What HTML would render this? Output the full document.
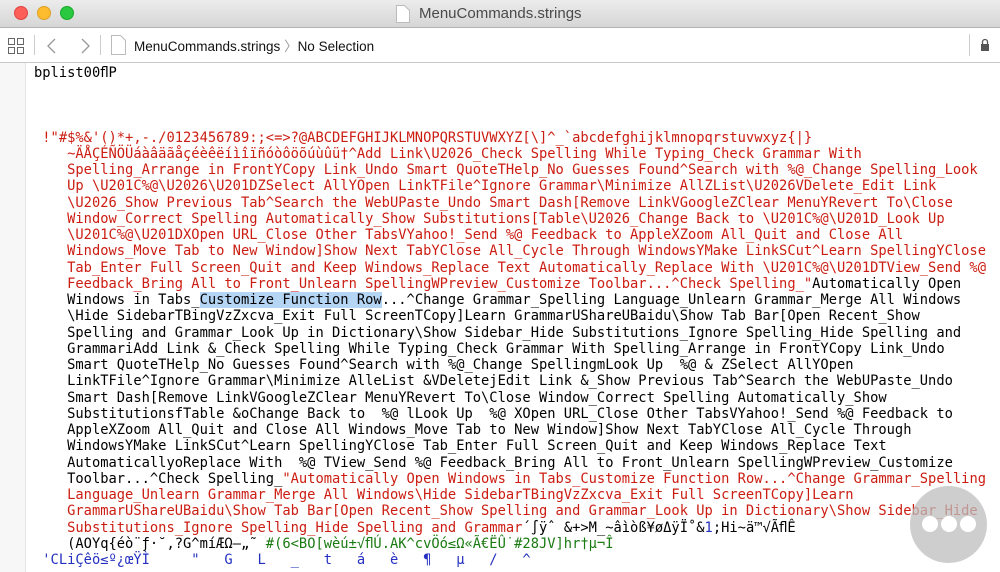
<!DOCTYPE html>
<html><head><meta charset="utf-8"><style>
*{margin:0;padding:0;box-sizing:border-box}
body{width:1000px;height:572px;overflow:hidden;background:#fff;position:relative;font-family:"Liberation Sans","DejaVu Sans",sans-serif}
#title{position:absolute;left:0;top:0;width:1000px;height:28px;background:linear-gradient(#ececec,#d6d6d6);border-bottom:1px solid #b4b4b4}
.tl{position:absolute;top:6px;width:14px;height:14px;border-radius:50%}
#ttext{position:absolute;left:419px;top:5px;font-size:15px;color:#4a4a4a}
#tb{position:absolute;left:0;top:28px;width:1000px;height:35px;background:#fff;border-bottom:1px solid #c8c8c8}
#crumb{position:absolute;left:134px;top:7px;font-size:13.5px;color:#111}
#gut{position:absolute;left:0;top:63px;width:26px;height:509px;background:#f7f7f7;border-right:1px solid #e6e6e6}
pre{position:absolute;left:34px;top:64.5px;font-family:"DejaVu Sans Mono","Liberation Mono",monospace;font-size:13.75px;line-height:16.25px;color:#000;white-space:pre}
.r{color:#cc1d12}.g{color:#1a7a12}.b{color:#2430c0}.h{background:#b5d5f5}
#fab{position:absolute;left:910px;top:486px;width:77px;height:77px;border-radius:50%;background:rgba(190,190,190,0.75)}
#fab i{position:absolute;top:30px;width:16px;height:16px;border-radius:50%;background:#fff}
</style></head><body>
<div id="title">
<div class="tl" style="left:14px;background:#fc5f57;border:1px solid #df4744"></div>
<div class="tl" style="left:37px;background:#fdbc2e;border:1px solid #de9f26"></div>
<div class="tl" style="left:60px;background:#29c840;border:1px solid #1aab29"></div>
<svg style="position:absolute;left:395px;top:4px" width="16" height="20"><path d="M1.5 1.5h8l5 5v12h-13z" fill="#fff" stroke="#bbb"/></svg>
<div id="ttext">MenuCommands.strings</div>
</div>
<div id="tb">
<svg style="position:absolute;left:7px;top:9px" width="18" height="18" fill="none" stroke="#666" stroke-width="1"><rect x="1.5" y="1.5" width="6" height="6"/><rect x="10.5" y="1.5" width="6" height="6"/><rect x="1.5" y="10.5" width="6" height="6"/><rect x="10.5" y="10.5" width="6" height="6"/></svg>
<div style="position:absolute;left:34px;top:7px;width:1px;height:20px;background:#ccc"></div>
<svg style="position:absolute;left:44px;top:9px" width="60" height="18" fill="none" stroke="#999" stroke-width="1.3"><path d="M11 2L4 9l7 7"/><path d="M38 2l7 7-7 7"/></svg>
<div style="position:absolute;left:100px;top:7px;width:1px;height:20px;background:#ccc"></div>
<svg style="position:absolute;left:110px;top:6px" width="18" height="22"><path d="M1.5 1.5h9l5 5v14h-14z" fill="#fff" stroke="#bbb"/></svg>
<div id="crumb">MenuCommands.strings <span style="color:#999">〉</span>No Selection</div>
<div style="position:absolute;left:969px;top:6px;width:1px;height:22px;background:#ccc"></div>
<svg style="position:absolute;left:980px;top:10px" width="10" height="14"><path d="M2.5 6V4a2.5 2.5 0 015 0v2" fill="none" stroke="#555" stroke-width="1.3"/><rect x="1" y="6" width="8" height="7" fill="#555"/></svg>
</div>
<div id="gut"></div>
<pre>bplist00ﬂP



<span class="r"> !"#$%&amp;'()*+,-./0123456789:;&lt;=&gt;?@ABCDEFGHIJKLMNOPQRSTUVWXYZ[\]^_`abcdefghijklmnopqrstuvwxyz{|}
    ~ÄÅÇÉÑÖÜáàâäãåçéèêëíìîïñóòôöõúùûü†^Add Link\U2026_Check Spelling While Typing_Check Grammar With
    Spelling_Arrange in FrontYCopy Link_Undo Smart QuoteTHelp_No Guesses Found^Search with %@_Change Spelling_Look
    Up \U201C%@\U2026\U201DZSelect AllYOpen LinkTFile^Ignore Grammar\Minimize AllZList\U2026VDelete_Edit Link
    \U2026_Show Previous Tab^Search the WebUPaste_Undo Smart Dash[Remove LinkVGoogleZClear MenuYRevert To\Close
    Window_Correct Spelling Automatically_Show Substitutions[Table\U2026_Change Back to \U201C%@\U201D_Look Up
    \U201C%@\U201DXOpen URL_Close Other TabsVYahoo!_Send %@ Feedback to AppleXZoom All_Quit and Close All
    Windows_Move Tab to New Window]Show Next TabYClose All_Cycle Through WindowsYMake LinkSCut^Learn SpellingYClose
    Tab_Enter Full Screen_Quit and Keep Windows_Replace Text Automatically_Replace With \U201C%@\U201DTView_Send %@
    Feedback_Bring All to Front_Unlearn SpellingWPreview_Customize Toolbar...^Check Spelling_"</span>Automatically Open
    Windows in Tabs_<span class="h">Customize Function Row</span>...^Change Grammar_Spelling Language_Unlearn Grammar_Merge All Windows
    \Hide SidebarTBingVzZxcva_Exit Full ScreenTCopy]Learn GrammarUShareUBaidu\Show Tab Bar[Open Recent_Show
    Spelling and Grammar_Look Up in Dictionary\Show Sidebar_Hide Substitutions_Ignore Spelling_Hide Spelling and
    GrammariAdd Link &amp;_Check Spelling While Typing_Check Grammar With Spelling_Arrange in FrontYCopy Link_Undo
    Smart QuoteTHelp_No Guesses Found^Search with %@_Change SpellingmLook Up  %@ &amp; ZSelect AllYOpen
    LinkTFile^Ignore Grammar\Minimize AlleList &amp;VDeletejEdit Link &amp;_Show Previous Tab^Search the WebUPaste_Undo
    Smart Dash[Remove LinkVGoogleZClear MenuYRevert To\Close Window_Correct Spelling Automatically_Show
    SubstitutionsfTable &amp;oChange Back to  %@ lLook Up  %@ XOpen URL_Close Other TabsVYahoo!_Send %@ Feedback to
    AppleXZoom All_Quit and Close All Windows_Move Tab to New Window]Show Next TabYClose All_Cycle Through
    WindowsYMake LinkSCut^Learn SpellingYClose Tab_Enter Full Screen_Quit and Keep Windows_Replace Text
    AutomaticallyoReplace With  %@ TView_Send %@ Feedback_Bring All to Front_Unlearn SpellingWPreview_Customize
    Toolbar...^Check Spelling_<span class="r">"Automatically Open Windows in Tabs_Customize Function Row...^Change Grammar_Spelling
    Language_Unlearn Grammar_Merge All Windows\Hide SidebarTBingVzZxcva_Exit Full ScreenTCopy]Learn
    GrammarUShareUBaidu\Show Tab Bar[Open Recent_Show Spelling and Grammar_Look Up in Dictionary\Show Sidebar_Hide
    Substitutions_Ignore Spelling_Hide Spelling and Grammar</span>´∫ÿˆ &amp;+&gt;M_~âìòß¥øΔÿÏ˚&amp;<span class="b">1</span>;Hi~ä™√ÃﬂÊ
    (AOYq{éò¨ƒ·˘,?G^míÆΩ—„˜ <span class="g">#(6&lt;BO[wèú±√ﬂÚ.AK^cvÖó≤Ω«Ã€ËÛ˙#28JV]hr†µ¬Î</span>
<span class="b"> 'CLiÇêö≤º¿œŸÌ     "   G   L   _   t   á   è   ¶   µ   /   ^</span></pre>
<div id="fab"><i style="left:12px"></i><i style="left:31px"></i><i style="left:50px"></i></div>
</body></html>
